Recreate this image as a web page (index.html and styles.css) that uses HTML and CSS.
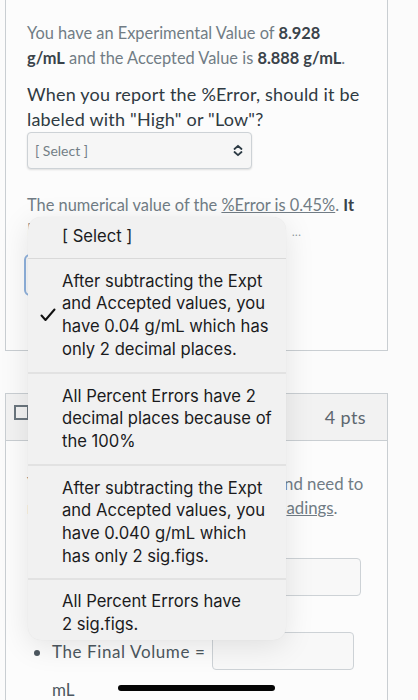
FILE: index.html
```html
<!DOCTYPE html>
<html lang="en">
<head>
<meta charset="utf-8">
<title>Quiz</title>
<link rel="stylesheet" href="styles.css">
</head>
<body>
<div class="page">
  <section class="card card-top">
    <div class="card-body">
      <p class="q-lead q-first">You have an Experimental Value of <b>8.928<br>g/mL</b> and the Accepted Value is <b>8.888 g/mL</b>.</p>
      <p class="q-ask">When you report the %Error, should it be<br>labeled with "High" or "Low"?</p>
      <div class="select"><span>[ Select ]</span><svg class="chev" width="10" height="13" viewBox="0 0 10 13"><path d="M1.5 5 L5 1.8 L8.5 5 M1.5 8 L5 11.2 L8.5 8" fill="none" stroke="#2d3b45" stroke-width="1.8" stroke-linecap="round" stroke-linejoin="round"/></svg></div>
      <p class="q-lead q-num">The numerical value of the <u>%Error is 0.45%</u>. <b>It</b><br><span class="nowrap">Is reported with 2 sig.figs. because <span class="dots">...</span></span></p>
      <div class="select select-focus"></div>
    </div>
  </section>

  <section class="card card-q2">
    <header class="card-head">
      <span class="flag"></span>
      <span class="pts">4 pts</span>
    </header>
    <div class="card-body body-q2">
      <p class="q-lead nowrap">You recorded both buret volumes a<span>nd need to</span><br>report them with the exact buret re<u>adings</u>.</p>
      <ul class="vols">
        <li>
          <div class="vol-row"><span>The Initial Volume =</span><span class="field field-wide"></span></div>
          <div class="unit">mL</div>
        </li>
        <li>
          <div class="vol-row"><span>The Final Volume =</span><span class="field"></span></div>
          <div class="unit">mL</div>
        </li>
      </ul>
    </div>
  </section>
</div>

<div class="menu">
  <div class="menu-item menu-first">[ Select ]</div>
  <div class="menu-item is-checked">
    <svg class="check" width="16" height="14" viewBox="0 0 16 14"><path d="M1.5 7.5 L5.5 12 L14.5 1.5" fill="none" stroke="#111" stroke-width="2" stroke-linecap="round" stroke-linejoin="round"/></svg>
    After subtracting the Expt and Accepted values, you have 0.04 g/mL which has only 2 decimal places.
  </div>
  <div class="menu-item">All Percent Errors have 2 decimal places because of the 100%</div>
  <div class="menu-item">After subtracting the Expt and Accepted values, you have 0.040 g/mL which has only 2 sig.figs.</div>
  <div class="menu-item menu-last">All Percent Errors have<br>2 sig.figs.</div>
</div>

<div class="home-bar"></div>
</body>
</html>
```

FILE: styles.css
```css
* { box-sizing: border-box; }
html, body { margin: 0; }
body {
  width: 418px;
  height: 700px;
  overflow: hidden;
  position: relative;
  background: #fbfbfb;
  font-family: Lato, "Liberation Sans", sans-serif;
  color: #6f7b84;
}
.page { padding: 0 30px 0 5px; }
.card {
  border: 1px solid #c9ced2;
  background: #fcfcfc;
}
.card-top { border-top: none; }
.card-body { padding: 20px 21px 54px; }
p { margin: 0; font-size: 16.2px; line-height: 25px; }
.nowrap { white-space: nowrap; }
.q-lead { color: #717c85; }
.q-first { font-size: 16.4px; }
.q-lead b { color: #3a434a; font-weight: 700; }
.q-ask { color: #2f3a42; margin-top: 12px; font-size: 18px; letter-spacing: 0.2px; }
.select {
  width: 225px;
  height: 37px;
  border: 1px solid #cdd2d6;
  border-radius: 4px;
  background: #f6f6f6;
  display: flex;
  align-items: center;
  justify-content: space-between;
  padding: 0 8px 0 7px;
  font-size: 14px;
  color: #737e86;
  box-shadow: 0 1px 2px rgba(0,0,0,0.12);
}
.q-num { margin-top: 23px; font-size: 16.4px; }
.dots { margin-left: 14px; color: #8a949b; font-size: 11px; letter-spacing: 0.5px; }
.select-focus {
  margin-top: 10px;
  margin-left: -3px;
  width: 240px;
  height: 42px;
  border: 2px solid #8fb1dc;
  border-radius: 6px;
  background: #f9f9f9;
  box-shadow: none;
}
.card-q2 { margin-top: 42px; }
.card-head {
  height: 47px;
  background: #f2f2f2;
  border-bottom: 1px solid #c9ced2;
  display: flex;
  justify-content: space-between;
  align-items: flex-start;
  padding: 0 21px 0 8px;
}
.flag {
  margin-top: 11px;
  width: 15px;
  height: 15px;
  border: 2px solid #6a757d;
}
.pts { font-size: 18px; line-height: 47px; color: #5d676f; letter-spacing: 0.4px; }
.body-q2 { padding: 31px 21px 0; }
.body-q2 p { line-height: 24px; font-size: 16.8px; }
.vols { list-style: disc; margin: 38px 0 0; padding: 0 0 0 25px; color: #4d5860; font-size: 17px; }
.vols li + li { margin-top: 4px; }
.vol-row { display: flex; align-items: center; gap: 7px; height: 38px; letter-spacing: 0.6px; }
.field {
  width: 142px;
  height: 38px;
  border: 1px solid #cdd2d6;
  border-radius: 4px;
  background: #f8f8f8;
}
.unit { margin-top: 8px; line-height: 24px; }

.menu {
  position: absolute;
  left: 28px;
  top: 217px;
  width: 258px;
  height: 423px;
  border-radius: 13px;
  background: #f1f1f1;
  box-shadow: 0 6px 30px rgba(0,0,0,0.10), 0 0 1px rgba(0,0,0,0.08);
  overflow: hidden;
  font-family: Inter, "Noto Sans", sans-serif;
  font-size: 16.6px;
  line-height: 22.7px;
  color: #1b1b1d;
}
.menu-item {
  position: relative;
  padding: 11px 8px 11px 34px;
  border-top: 2px solid #e2e2e2;
}
.menu-first { border-top: none; padding-top: 8px; padding-bottom: 10px; border-bottom: 1px solid #d9d9d9; }
.menu-first + .menu-item { border-top: none; }
.menu-last { padding-top: 10px; }
.check { position: absolute; left: 12px; top: 50%; margin-top: -7px; }
.home-bar {
  position: absolute;
  left: 118px;
  top: 685px;
  width: 157px;
  height: 6px;
  border-radius: 3px;
  background: #050505;
}
```
